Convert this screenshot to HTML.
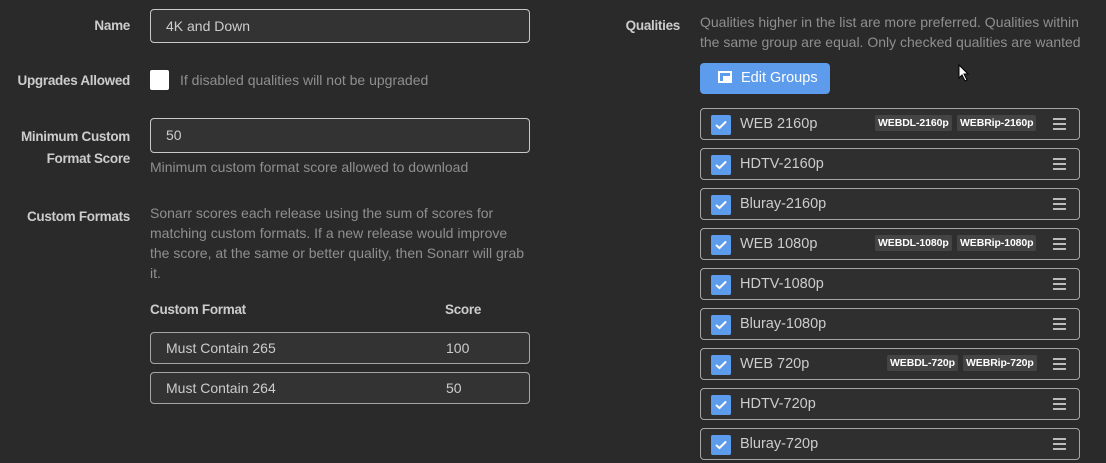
<!DOCTYPE html>
<html><head><style>
*{box-sizing:border-box;margin:0;padding:0}
body{width:1106px;height:463px;background:#2a2a2a;font-family:"Liberation Sans",Arial,sans-serif;color:#ccc;position:relative;overflow:hidden;font-size:14px}
.a{position:absolute}
.lbl{position:absolute;right:976px;text-align:right;font-weight:bold;font-size:13.5px;color:#ccc;letter-spacing:-0.3px;line-height:22px}
.inp{position:absolute;left:150px;width:380px;background:#333;border:1px solid #c8c8c8;border-radius:4px;color:#ccc;font-size:14px;padding-left:15px}
.help{position:absolute;color:#8f8f8f;font-size:14px;line-height:20px}
.q{position:absolute;left:700px;width:380px;height:32px;border:1px solid #a6a6a6;border-radius:4px;background:#2f2f2f}
.cb{position:absolute;left:10px;top:6px;width:20px;height:20px;background:#5d9cec;border-radius:2px}
.cb svg{position:absolute;left:4px;top:5px}
.ql{position:absolute;left:39px;top:7px;font-size:14.5px;color:#ccc}
.tag{position:absolute;top:6px;height:16px;background:#444;color:#fff;font-size:10.5px;font-weight:bold;line-height:16px;padding:0 3px;border-radius:2px;letter-spacing:-0.1px}
.hb{position:absolute;left:352px;top:9px;width:13px;height:12px;border-top:2px solid #bbb;border-bottom:2px solid #bbb}
.hb:after{content:"";position:absolute;left:0;right:0;top:3px;height:2px;background:#bbb}
</style></head><body>
<div class="lbl" style="top:15px">Name</div>
<div class="inp" style="top:9px;height:34px;line-height:32px">4K and Down</div>
<div class="lbl" style="top:70px">Upgrades Allowed</div>
<div class="a" style="left:150px;top:70px;width:19px;height:20px;background:#fff;border-radius:2px"></div>
<div class="help" style="left:180px;top:70px">If disabled qualities will not be upgraded</div>
<div class="lbl" style="top:126px">Minimum Custom<br>Format Score</div>
<div class="inp" style="top:118px;height:35px;line-height:33px">50</div>
<div class="help" style="left:150px;top:157px">Minimum custom format score allowed to download</div>
<div class="lbl" style="top:206px">Custom Formats</div>
<div class="help" style="left:150px;top:203px;width:380px">Sonarr scores each release using the sum of scores for matching custom formats. If a new release would improve the score, at the same or better quality, then Sonarr will grab it.</div>
<div class="a" style="left:150px;top:302px;font-weight:bold;font-size:13.5px;letter-spacing:-0.3px">Custom Format</div>
<div class="a" style="left:445px;top:302px;font-weight:bold;font-size:13.5px;letter-spacing:-0.3px">Score</div>
<div class="inp" style="top:332px;height:32px;line-height:30px;border-color:#a6a6a6">Must Contain 265<span class="a" style="left:295px">100</span></div>
<div class="inp" style="top:372px;height:32px;line-height:30px;border-color:#a6a6a6">Must Contain 264<span class="a" style="left:295px">50</span></div>

<div class="lbl" style="top:15px;right:426px">Qualities</div>
<div class="help" style="left:700px;top:12px;width:390px">Qualities higher in the list are more preferred. Qualities within the same group are equal. Only checked qualities are wanted</div>
<div class="a" style="left:700px;top:63px;width:130px;height:31px;background:#5d9cec;border-radius:4px;color:#fff;font-size:14.5px;line-height:31px;padding-left:41px">Edit Groups</div>
<div class="a" style="left:718px;top:71px;width:14px;height:12px;border:2px solid #fff"></div>
<div class="a" style="left:723px;top:76px;width:7px;height:5px;background:#fff"></div>
<svg class="a" style="left:958px;top:64px" width="12" height="18"><path d="M1 1 L1 14 L4 11 L7 17 L9 16 L6 10 L10 10 Z" fill="#fff" stroke="#000" stroke-width="1"/></svg>

<div class="q" style="top:108px"><div class="cb"><svg width="12" height="10"><path d="M1 5 L4.5 8 L11 1.5" stroke="#fff" stroke-width="2" fill="none"/></svg></div><div class="ql">WEB 2160p</div><div class="tag" style="left:174px">WEBDL-2160p</div><div class="tag" style="left:256px">WEBRip-2160p</div><div class="hb"></div></div>
<div class="q" style="top:148px"><div class="cb"><svg width="12" height="10"><path d="M1 5 L4.5 8 L11 1.5" stroke="#fff" stroke-width="2" fill="none"/></svg></div><div class="ql">HDTV-2160p</div><div class="hb"></div></div>
<div class="q" style="top:188px"><div class="cb"><svg width="12" height="10"><path d="M1 5 L4.5 8 L11 1.5" stroke="#fff" stroke-width="2" fill="none"/></svg></div><div class="ql">Bluray-2160p</div><div class="hb"></div></div>
<div class="q" style="top:228px"><div class="cb"><svg width="12" height="10"><path d="M1 5 L4.5 8 L11 1.5" stroke="#fff" stroke-width="2" fill="none"/></svg></div><div class="ql">WEB 1080p</div><div class="tag" style="left:174px">WEBDL-1080p</div><div class="tag" style="left:256px">WEBRip-1080p</div><div class="hb"></div></div>
<div class="q" style="top:268px"><div class="cb"><svg width="12" height="10"><path d="M1 5 L4.5 8 L11 1.5" stroke="#fff" stroke-width="2" fill="none"/></svg></div><div class="ql">HDTV-1080p</div><div class="hb"></div></div>
<div class="q" style="top:308px"><div class="cb"><svg width="12" height="10"><path d="M1 5 L4.5 8 L11 1.5" stroke="#fff" stroke-width="2" fill="none"/></svg></div><div class="ql">Bluray-1080p</div><div class="hb"></div></div>
<div class="q" style="top:348px"><div class="cb"><svg width="12" height="10"><path d="M1 5 L4.5 8 L11 1.5" stroke="#fff" stroke-width="2" fill="none"/></svg></div><div class="ql">WEB 720p</div><div class="tag" style="left:186px">WEBDL-720p</div><div class="tag" style="left:262px">WEBRip-720p</div><div class="hb"></div></div>
<div class="q" style="top:388px"><div class="cb"><svg width="12" height="10"><path d="M1 5 L4.5 8 L11 1.5" stroke="#fff" stroke-width="2" fill="none"/></svg></div><div class="ql">HDTV-720p</div><div class="hb"></div></div>
<div class="q" style="top:428px"><div class="cb"><svg width="12" height="10"><path d="M1 5 L4.5 8 L11 1.5" stroke="#fff" stroke-width="2" fill="none"/></svg></div><div class="ql">Bluray-720p</div><div class="hb"></div></div>
</body></html>
